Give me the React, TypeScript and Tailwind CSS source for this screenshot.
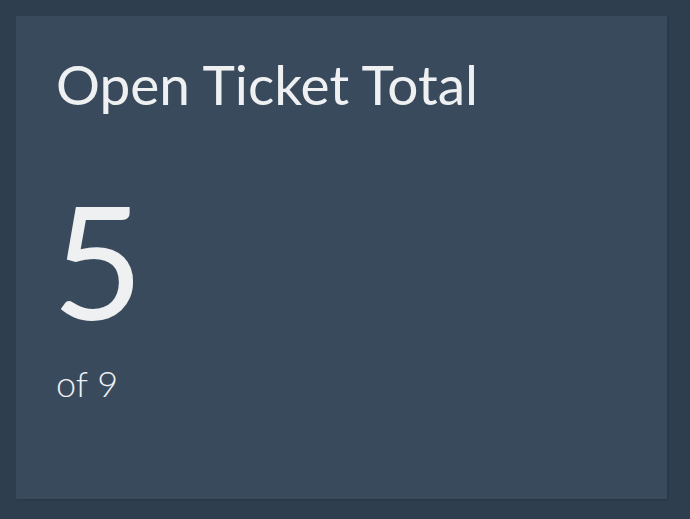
export default function App() {
  return (
    <div className="min-h-screen w-full bg-[#2f3e4f] p-4" style={{ fontFamily: "Lato, 'Noto Sans', sans-serif" }}>
      <div className="h-[483px] w-[651px] bg-[#3a4a5d] px-10 pt-[35px] text-[#eef0f2] shadow-[1px_1px_2px_rgba(0,0,0,0.15)]">
        <h1 className="text-[55px] leading-[66px] font-normal">Open Ticket Total</h1>
        <div className="-ml-1 mt-[63px] text-[158px] leading-[158px] font-normal">5</div>
        <div className="mt-[25px] text-[36px] leading-[40px] font-light">of 9</div>
      </div>
    </div>
  );
}
